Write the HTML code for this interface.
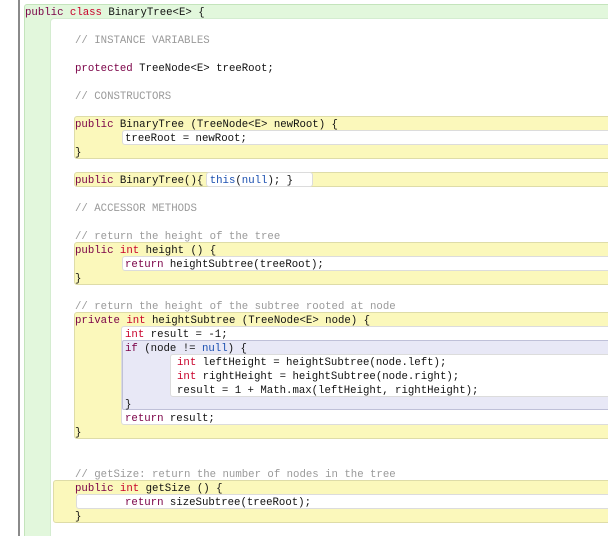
<!DOCTYPE html>
<html><head><meta charset="utf-8"><style>
html,body{margin:0;padding:0;width:608px;height:536px;overflow:hidden;background:#fff;position:relative}
div{position:absolute;box-sizing:border-box}
.t{font-family:"Liberation Mono","DejaVu Sans Mono",monospace;font-size:10.7px;line-height:14px;height:16px;padding-top:2px;white-space:pre;color:#111}
.k{color:#7a0046}.r{color:#c8002a}.b{color:#1a4fb0}.c{color:#9a9a9a}
.y{background:#fbf8bb;border:1px solid #dedca8;border-radius:3px}
.w{background:#fff;border:1px solid #dcdcdc;border-radius:3px}
.l{background:#e8e8f6;border:1px solid #bfc0d8;border-radius:2px}
</style></head><body>
<div style="left:18px;top:0;width:2px;height:536px;background:#8a8a8a"></div>
<div style="left:24px;top:4px;width:600px;height:540px;background:#e2f7dc;border:1px solid #c4e4bc;border-radius:3px"></div>
<div style="left:50px;top:18px;width:570px;height:530px;background:#fff;border:1px solid #d4ecd0;border-radius:4px"></div>
<div class="t" style="left:25px;top:4px"><span class="k">public</span> <span class="r">class</span> BinaryTree&lt;E&gt; {</div>

<div class="t c" style="left:75px;top:32px">// INSTANCE VARIABLES</div>
<div class="t" style="left:75px;top:60px"><span class="k">protected</span> TreeNode&lt;E&gt; treeRoot;</div>
<div class="t c" style="left:75px;top:88px">// CONSTRUCTORS</div>

<div class="y" style="left:74px;top:116px;width:540px;height:43px"></div>
<div class="w" style="left:122px;top:130px;width:490px;height:15px"></div>
<div class="t" style="left:75px;top:116px"><span class="k">public</span> BinaryTree (TreeNode&lt;E&gt; newRoot) {</div>
<div class="t" style="left:125px;top:130px">treeRoot = newRoot;</div>
<div class="t" style="left:75px;top:144px">}</div>

<div class="y" style="left:74px;top:172px;width:540px;height:15px"></div>
<div class="w" style="left:206px;top:172px;width:107px;height:15px"></div>
<div class="t" style="left:75px;top:172px"><span class="k">public</span> BinaryTree(){ <span class="b">this</span>(<span class="b">null</span>); }</div>

<div class="t c" style="left:75px;top:200px">// ACCESSOR METHODS</div>
<div class="t c" style="left:75px;top:228px">// return the height of the tree</div>
<div class="y" style="left:74px;top:242px;width:540px;height:43px"></div>
<div class="w" style="left:122px;top:256px;width:490px;height:15px"></div>
<div class="t" style="left:75px;top:242px"><span class="k">public</span> <span class="r">int</span> height () {</div>
<div class="t" style="left:125px;top:256px"><span class="k">return</span> heightSubtree(treeRoot);</div>
<div class="t" style="left:75px;top:270px">}</div>

<div class="t c" style="left:75px;top:298px">// return the height of the subtree rooted at node</div>
<div class="y" style="left:74px;top:312px;width:540px;height:127px"></div>
<div class="w" style="left:121px;top:326px;width:492px;height:99px"></div>
<div class="l" style="left:122px;top:340px;width:490px;height:70px"></div>
<div class="w" style="left:170px;top:354px;width:442px;height:43px"></div>
<div class="t" style="left:75px;top:312px"><span class="k">private</span> <span class="r">int</span> heightSubtree (TreeNode&lt;E&gt; node) {</div>
<div class="t" style="left:125px;top:326px"><span class="r">int</span> result = -1;</div>
<div class="t" style="left:125px;top:340px"><span class="k">if</span> (node != <span class="b">null</span>) {</div>
<div class="t" style="left:177px;top:354px"><span class="r">int</span> leftHeight = heightSubtree(node.left);</div>
<div class="t" style="left:177px;top:368px"><span class="r">int</span> rightHeight = heightSubtree(node.right);</div>
<div class="t" style="left:177px;top:382px">result = 1 + Math.max(leftHeight, rightHeight);</div>
<div class="t" style="left:125px;top:396px">}</div>
<div class="t" style="left:125px;top:410px"><span class="k">return</span> result;</div>
<div class="t" style="left:75px;top:424px">}</div>

<div class="t c" style="left:75px;top:466px">// getSize: return the number of nodes in the tree</div>
<div class="y" style="left:53px;top:480px;width:560px;height:43px"></div>
<div class="w" style="left:76px;top:494px;width:536px;height:15px"></div>
<div class="t" style="left:75px;top:480px"><span class="k">public</span> <span class="r">int</span> getSize () {</div>
<div class="t" style="left:125px;top:494px"><span class="k">return</span> sizeSubtree(treeRoot);</div>
<div class="t" style="left:75px;top:508px">}</div>
</body></html>
